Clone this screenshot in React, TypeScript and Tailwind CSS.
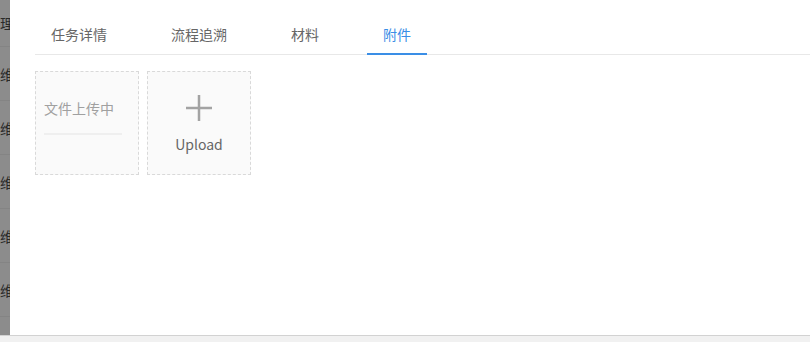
import React from 'react'

const tabs = ['任务详情', '流程追溯', '材料', '附件']
const rows = ['理', '维', '维', '维', '维', '维']

const App: React.FC = () => {
  const active = 3

  return (
    <div
      className="w-[810px] h-[342px] flex flex-col bg-white overflow-hidden"
      style={{ fontFamily: '"Noto Sans CJK SC", "Noto Sans", sans-serif' }}
    >
      <div className="flex flex-1 min-h-0">
        {/* masked table behind the drawer */}
        <div className="w-[10px] shrink-0 bg-[#8c8c8c] overflow-hidden flex flex-col">
          {rows.map((ch, i) => (
            <div
              key={i}
              className={`${i === 0 ? 'h-[47px]' : 'h-[54px]'} shrink-0 border-b border-[#848484] flex items-center justify-end`}
            >
              <span className="text-[14px] text-[#2a2a2a] mr-[-4px] leading-none">{ch}</span>
            </div>
          ))}
        </div>

        {/* drawer */}
        <div className="flex-1 bg-white pl-[25px] pt-[10px]">
          <div className="flex border-b border-[#e8e8e8]">
            {tabs.map((t, i) => (
              <div
                key={t}
                className={`relative px-4 pt-[13px] pb-[9px] mr-8 text-[14px] leading-[22px] ${
                  i === active ? 'text-[#3a8ee6]' : 'text-[#666666]'
                }`}
              >
                {t}
                {i === active && <div className="absolute left-0 right-0 bottom-[-1px] h-[2px] bg-[#3a8ee6]" />}
              </div>
            ))}
          </div>

          <div className="flex gap-2 mt-[16px]">
            <div className="w-[104px] h-[104px] border border-dashed border-[#d9d9d9] bg-[#fafafa] px-2 pt-[25px]">
              <div className="text-[14px] leading-[22px] text-[#a0a0a0]">文件上传中</div>
              <div className="mt-[14px] h-[2px] w-[78px] bg-[#efefef]" />
            </div>
            <div className="w-[104px] h-[104px] border border-dashed border-[#d9d9d9] bg-[#fafafa] flex flex-col items-center pt-[22px]">
              <svg width="28" height="28" viewBox="0 0 28 28" fill="none">
                <path d="M14 1v26M1 14h26" stroke="#a3a3a3" strokeWidth="2.5" />
              </svg>
              <div className="mt-[11px] text-[14px] leading-[22px] text-[#666666]">Upload</div>
            </div>
          </div>
        </div>
      </div>

      {/* bottom bar */}
      <div className="h-[7px] shrink-0 bg-[#f1f1f1] border-t border-[#d2d2d2]" />
    </div>
  )
}

export default App
